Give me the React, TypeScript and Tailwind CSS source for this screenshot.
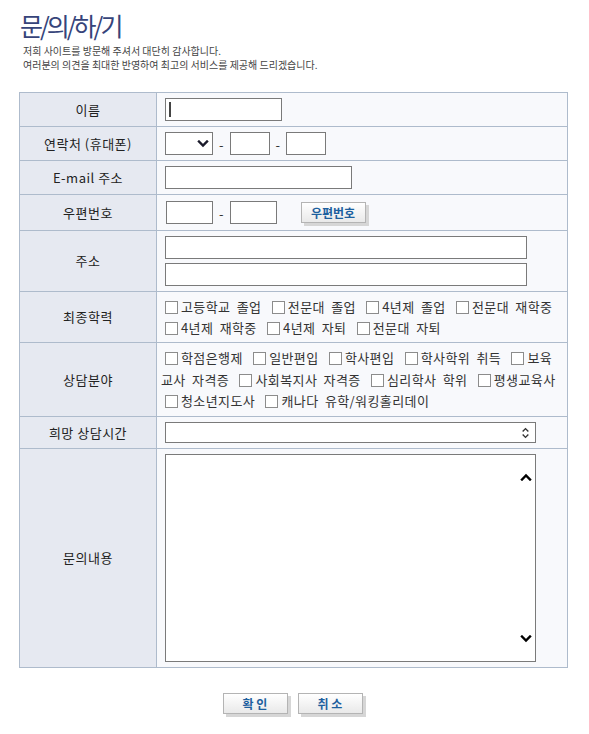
import type { ReactNode } from 'react';

const font = { fontFamily: '"Noto Sans CJK KR", "Noto Sans", sans-serif' };

// checkbox square with the margins a native checkbox would have
function Box() {
  return <span className="ml-[4px] mr-[3px] inline-block h-[13px] w-[13px] border border-[#8c8c8c] bg-white align-[-2px]" />;
}

function Row({ label, h, children }: { label: string; h: string; children: ReactNode }) {
  return (
    <tr>
      <td className={`${h} w-[137px] border border-[#aebbcc] bg-[#e6e9f1] text-center text-[13px] tracking-[0.5px] text-[#222]`}>{label}</td>
      <td className="border border-[#aebbcc] bg-[#f8f9fc] pl-2 pr-2 text-[13px] text-[#333]">{children}</td>
    </tr>
  );
}

function Field({ w }: { w: string }) {
  return <input type="text" className={`${w} h-[23px] border border-[#7a7a7a] bg-white align-middle outline-none`} />;
}

function Dash() {
  return <span className="mx-[6px] inline-block align-[-3px] text-[13px] leading-none">-</span>;
}

function Chevron({ up, className }: { up?: boolean; className: string }) {
  return (
    <svg viewBox="0 0 12 8" className={className} fill="none" stroke="currentColor" strokeWidth="2.4" strokeLinecap="square">
      {up ? <path d="M2 6.5 6 2.5l4 4" /> : <path d="M2 1.5l4 4 4-4" />}
    </svg>
  );
}

function GrayButton({ children, w }: { children: ReactNode; w: string }) {
  return (
    <button
      type="button"
      className={`${w} h-[21px] border border-[#b4b4b4] bg-gradient-to-b from-white to-[#e9e9e9] text-[12px] font-semibold leading-none text-[#1d5f9e] shadow-[3px_3px_0_#d6d6d6] align-middle`}
    >
      {children}
    </button>
  );
}

export default function App() {
  return (
    <div className="min-h-[734px] w-[589px] bg-white" style={font}>
      <div className="pl-5 pt-[9px]">
        <h1 className="text-[25px] font-normal leading-[32px] tracking-[-3px] text-[#36447a]">문/의/하/기</h1>
        <p className="ml-[3px] mt-[3px] text-[10px] leading-[14px] text-[#444]">
          저희 사이트를 방문해 주셔서 대단히 감사합니다.
          <br />
          여러분의 의견을 최대한 반영하여 최고의 서비스를 제공해 드리겠습니다.
        </p>
      </div>

      <table className="ml-[19px] mt-[20px] w-[549px] border-collapse">
        <tbody>
          <Row label="이름" h="h-[34px]">
            <span className="relative inline-block align-middle">
              <Field w="w-[117px]" />
              <span className="absolute left-[4px] top-[4px] h-[15px] w-[2px] bg-[#444]" />
            </span>
          </Row>
          <Row label="연락처 (휴대폰)" h="h-[34px]">
            <span className="relative inline-block h-[23px] w-[48px] border border-[#7a7a7a] bg-white align-middle">
              <Chevron className="absolute right-[3px] top-[7px] h-[8px] w-[12px] text-[#1a1a2a]" />
            </span>
            <Dash />
            <Field w="w-[40px]" />
            <Dash />
            <Field w="w-[40px]" />
          </Row>
          <Row label="E-mail 주소" h="h-[34px]">
            <Field w="w-[187px]" />
          </Row>
          <Row label="우편번호" h="h-[36px]">
            <span className="ml-px" />
            <Field w="w-[47px]" />
            <Dash />
            <Field w="w-[47px]" />
            <span className="ml-[24px]" />
            <GrayButton w="w-[65px]">우편번호</GrayButton>
          </Row>
          <Row label="주소" h="h-[61px]">
            <div className="flex flex-col gap-[4px]">
              <Field w="w-[362px]" />
              <Field w="w-[362px]" />
            </div>
          </Row>
          <Row label="최종학력" h="h-[51px]">
            <div className="-ml-[4px] whitespace-nowrap leading-[21px] tracking-[0.4px] [word-spacing:3px]">
              <Box />고등학교 졸업 <Box />전문대 졸업 <Box />4년제 졸업 <Box />전문대 재학중
              <br />
              <Box />4년제 재학중 <Box />4년제 자퇴 <Box />전문대 자퇴
            </div>
          </Row>
          <Row label="상담분야" h="h-[74px]">
            <div className="-ml-[4px] whitespace-nowrap leading-[21.5px] tracking-[0.4px] [word-spacing:3px]">
              <Box />학점은행제 <Box />일반편입 <Box />학사편입 <Box />학사학위 취득 <Box />보육
              <br />
              교사 자격증 <Box />사회복지사 자격증 <Box />심리학사 학위 <Box />평생교육사
              <br />
              <Box />청소년지도사 <Box />캐나다 유학/워킹홀리데이
            </div>
          </Row>
          <Row label="희망 상담시간" h="h-[32px]">
            <span className="relative block h-[21px] w-[371px] border border-[#7a7a7a] bg-white">
              <Chevron up className="absolute right-[6px] top-[4px] h-[5px] w-[7px] text-[#333]" />
              <Chevron className="absolute right-[6px] top-[11px] h-[5px] w-[7px] text-[#333]" />
            </span>
          </Row>
          <Row label="문의내용" h="h-[219px]">
            <div className="relative h-[208px] w-[371px] border border-[#7a7a7a] bg-white">
              <Chevron up className="absolute right-[3px] top-[18px] h-[8px] w-[12px] text-black" />
              <Chevron className="absolute right-[3px] bottom-[18px] h-[8px] w-[12px] text-black" />
            </div>
          </Row>
        </tbody>
      </table>

      <div className="mt-[25px] flex justify-center gap-[10px] pr-[4px]">
        <GrayButton w="w-[65px]">확 인</GrayButton>
        <GrayButton w="w-[65px]">취 소</GrayButton>
      </div>
    </div>
  );
}
